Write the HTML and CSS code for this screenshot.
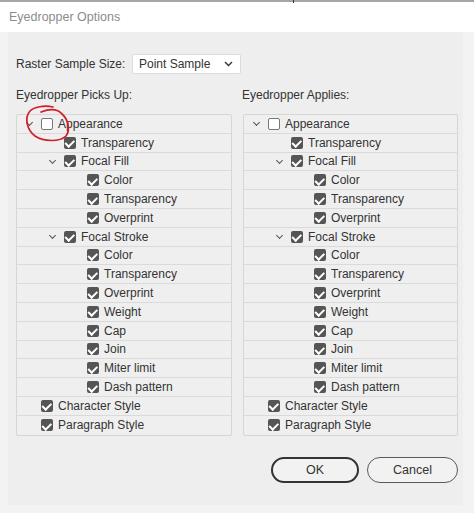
FILE: index.html
```html
<!DOCTYPE html>
<html>
<head>
<meta charset="utf-8">
<link rel="stylesheet" href="styles.css">
</head>
<body>
<div class="window">
  <div class="topbar"><span class="tick"></span></div>
  <div class="titlebar">Eyedropper Options</div>
  <div class="panel">
    <div class="sample-row">
      <span class="label">Raster Sample Size:</span>
      <div class="select"><span>Point Sample</span>
        <svg class="sel-chev" width="9" height="6" viewBox="0 0 9 6"><path d="M1 1 L4.5 4.5 L8 1" fill="none" stroke="#333" stroke-width="1.4"/></svg>
      </div>
    </div>
    <div class="columns">
      <div class="col">
        <div class="heading">Eyedropper Picks Up:</div>
        <div class="tree">
          <div class="row l0"><span class="chev"></span><span class="cb off"></span>Appearance</div>
          <div class="row l1"><span class="cb"></span>Transparency</div>
          <div class="row l1"><span class="chev"></span><span class="cb"></span>Focal Fill</div>
          <div class="row l2"><span class="cb"></span>Color</div>
          <div class="row l2"><span class="cb"></span>Transparency</div>
          <div class="row l2"><span class="cb"></span>Overprint</div>
          <div class="row l1"><span class="chev"></span><span class="cb"></span>Focal Stroke</div>
          <div class="row l2"><span class="cb"></span>Color</div>
          <div class="row l2"><span class="cb"></span>Transparency</div>
          <div class="row l2"><span class="cb"></span>Overprint</div>
          <div class="row l2"><span class="cb"></span>Weight</div>
          <div class="row l2"><span class="cb"></span>Cap</div>
          <div class="row l2"><span class="cb"></span>Join</div>
          <div class="row l2"><span class="cb"></span>Miter limit</div>
          <div class="row l2"><span class="cb"></span>Dash pattern</div>
          <div class="row l0"><span class="cb"></span>Character Style</div>
          <div class="row l0 last"><span class="cb"></span>Paragraph Style</div>
          <svg class="scribble" width="60" height="50" viewBox="0 0 60 50"><path d="M21 8 C29 5, 37 5, 41 9 C48 15, 51 25, 46 32 C40 38, 24 38, 15 32 C7 26, 4 14, 10 7 C14 3, 24 1, 33 3" fill="none" stroke="#d11f27" stroke-width="1.7" stroke-linecap="round"/></svg>
        </div>
      </div>
      <div class="col right">
        <div class="heading">Eyedropper Applies:</div>
        <div class="tree">
          <div class="row l0"><span class="chev"></span><span class="cb off"></span>Appearance</div>
          <div class="row l1"><span class="cb"></span>Transparency</div>
          <div class="row l1"><span class="chev"></span><span class="cb"></span>Focal Fill</div>
          <div class="row l2"><span class="cb"></span>Color</div>
          <div class="row l2"><span class="cb"></span>Transparency</div>
          <div class="row l2"><span class="cb"></span>Overprint</div>
          <div class="row l1"><span class="chev"></span><span class="cb"></span>Focal Stroke</div>
          <div class="row l2"><span class="cb"></span>Color</div>
          <div class="row l2"><span class="cb"></span>Transparency</div>
          <div class="row l2"><span class="cb"></span>Overprint</div>
          <div class="row l2"><span class="cb"></span>Weight</div>
          <div class="row l2"><span class="cb"></span>Cap</div>
          <div class="row l2"><span class="cb"></span>Join</div>
          <div class="row l2"><span class="cb"></span>Miter limit</div>
          <div class="row l2"><span class="cb"></span>Dash pattern</div>
          <div class="row l0"><span class="cb"></span>Character Style</div>
          <div class="row l0 last"><span class="cb"></span>Paragraph Style</div>
        </div>
      </div>
    </div>
    <div class="buttons">
      <button class="btn ok">OK</button>
      <button class="btn cancel">Cancel</button>
    </div>
  </div>
</div>
</body>
</html>
```

FILE: styles.css
```css
* { box-sizing: border-box; }
html, body { margin: 0; padding: 0; }
body {
  width: 474px;
  height: 513px;
  overflow: hidden;
  background: #f2f2f2;
  font-family: "Liberation Sans", Arial, sans-serif;
  font-size: 12px;
  color: #333;
}
.window {
  width: 474px;
  height: 513px;
  display: flex;
  flex-direction: column;
  background: #f3f3f3;
}
.topbar {
  height: 2px;
  background: #a6a6a6;
  position: relative;
}
.tick {
  position: absolute;
  left: 293px;
  top: 0;
  width: 1px;
  height: 3px;
  background: #333;
}
.titlebar {
  height: 30px;
  background: #fff;
  color: #8c8c8c;
  font-size: 12.5px;
  padding-left: 9px;
  display: flex;
  align-items: center;
}
.panel {
  margin: 0 11px 0 8px;
  height: 473px;
  background: #eeeeee;
  padding: 22px 5px 0 8px;
  display: flex;
  flex-direction: column;
}
.sample-row {
  display: flex;
  align-items: center;
  height: 20px;
}
.label { width: 116px; }
.select {
  width: 109px;
  height: 20px;
  background: #fff;
  border: 1px solid #dcdcdc;
  border-radius: 2px;
  display: flex;
  align-items: center;
  justify-content: space-between;
  padding: 0 7px 0 6px;
}
.columns {
  display: flex;
  gap: 10px;
  margin-top: 13px;
}
.col { width: 216px; }
.heading {
  height: 16px;
  line-height: 16px;
  margin-bottom: 11px;
}
.right .tree { margin-left: 1px; width: 215px; }
.tree {
  position: relative;
  border: 1px solid #d6d6d6;
  border-radius: 2px;
  background: #efefef;
}
.row {
  height: 18.8px;
  display: flex;
  align-items: center;
  border-bottom: 1px solid #dadada;
  position: relative;
}
.row.last { border-bottom: none; }
.l0 { padding-left: 24px; }
.l1 { padding-left: 47px; }
.l2 { padding-left: 70px; }
.cb {
  width: 12px;
  height: 12px;
  margin-right: 5px;
  border-radius: 2px;
  background: #555;
  position: relative;
  flex: none;
}
.cb::after {
  content: "";
  position: absolute;
  left: 3px;
  top: 1.5px;
  width: 3.5px;
  height: 6.5px;
  border: solid #fff;
  border-width: 0 2px 2px 0;
  transform: rotate(45deg);
}
.cb.off {
  background: #fff;
  border: 1px solid #777;
}
.cb.off::after { display: none; }
.chev {
  position: absolute;
  width: 5px;
  height: 5px;
  border: solid #555;
  border-width: 0 1.2px 1.2px 0;
  transform: rotate(45deg);
}
.l0 .chev { left: 10px; top: 5px; }
.l1 .chev { left: 33px; top: 5px; }
.scribble {
  position: absolute;
  left: 3px;
  top: -11px;
  pointer-events: none;
}
.buttons {
  display: flex;
  justify-content: flex-end;
  gap: 8px;
  margin-top: 21px;
}
.btn {
  font-family: "Liberation Sans", Arial, sans-serif;
  font-size: 12.5px;
  color: #333;
  background: #f2f2f2;
  height: 26px;
  border-radius: 13px;
  padding: 0;
}
.ok {
  width: 88px;
  border: 2px solid #333;
}
.cancel {
  width: 91px;
  border: 1px solid #5a5a5a;
}
```
